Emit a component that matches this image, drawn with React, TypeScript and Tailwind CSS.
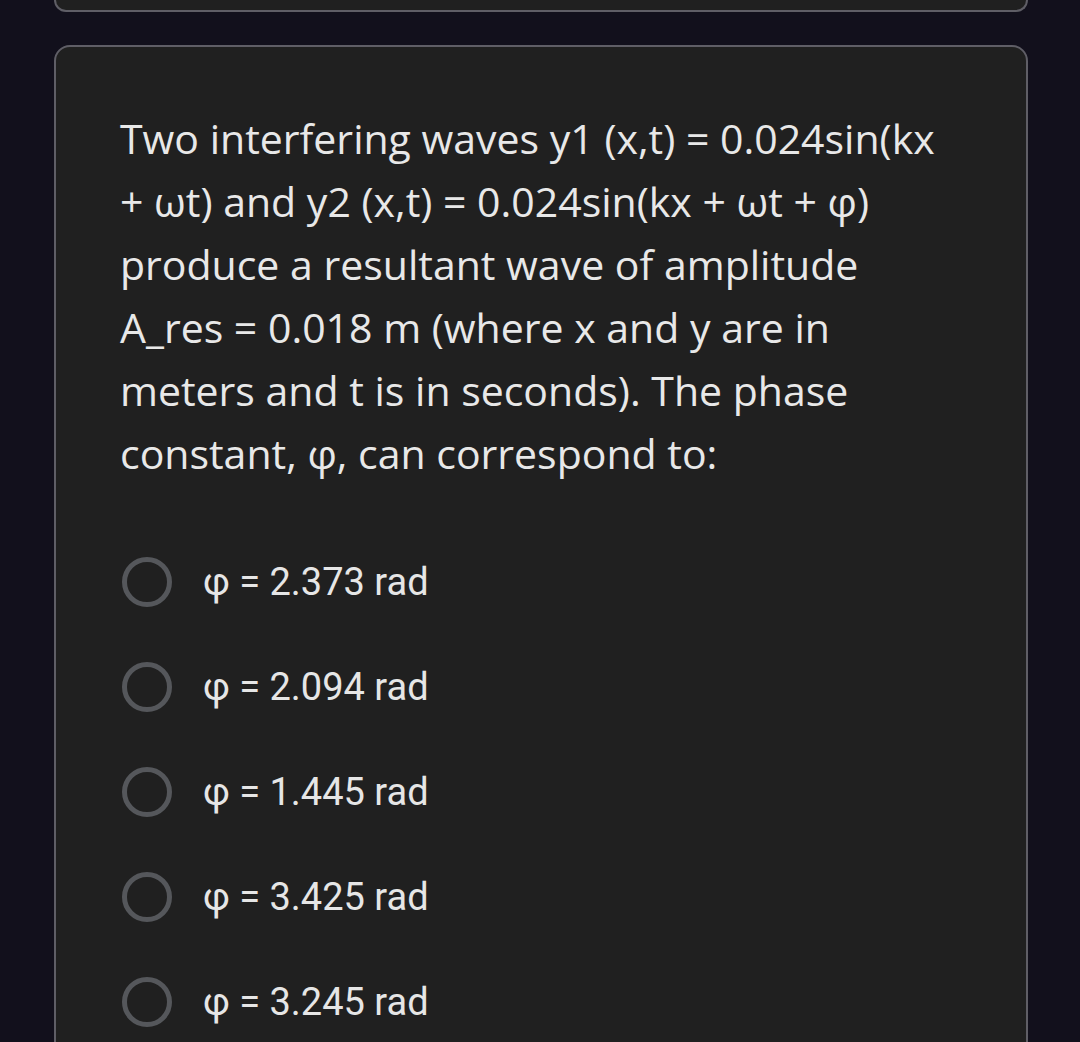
const lines = [
  "Two interfering waves y1 (x,t) = 0.024sin(kx",
  "+ ωt) and y2 (x,t) = 0.024sin(kx + ωt + φ)",
  "produce a resultant wave of amplitude",
  "A_res = 0.018 m (where x and y are in",
  "meters and t is in seconds). The phase",
  "constant, φ, can correspond to:",
];

const options = ["2.373", "2.094", "1.445", "3.425", "3.245"];

export default function App() {
  return (
    <div className="h-[1042px] overflow-hidden bg-[#12101c] px-[54px] pr-[52px]">
      {/* previous card edge */}
      <div className="h-[12px] rounded-b-[16px] border-2 border-t-0 border-[#5f5e66] bg-[#202020]" />

      <div className="mt-[33px] rounded-[16px] border-2 border-[#5f5e66] bg-[#202020] pl-[64px] pt-[60px] pb-10">
        <p className="font-['Open_Sans',sans-serif] text-[41px] leading-[63px] text-[#e8e8e8]">
          {lines.map((l, i) => (
            <span key={i} className="block whitespace-nowrap">
              {l}
            </span>
          ))}
        </p>

        <div className="mt-[71px] flex flex-col gap-[53px]">
          {options.map((o) => (
            <div key={o} className="flex h-[52px] items-center">
              <div className="ml-[2px] h-[50px] w-[50px] rounded-full border-[5px] border-[#55575b]" />
              <span className="ml-[31px] font-['Roboto',sans-serif] text-[38px] text-[#e6e6e6]">
                φ = {o} rad
              </span>
            </div>
          ))}
        </div>
      </div>
    </div>
  );
}
